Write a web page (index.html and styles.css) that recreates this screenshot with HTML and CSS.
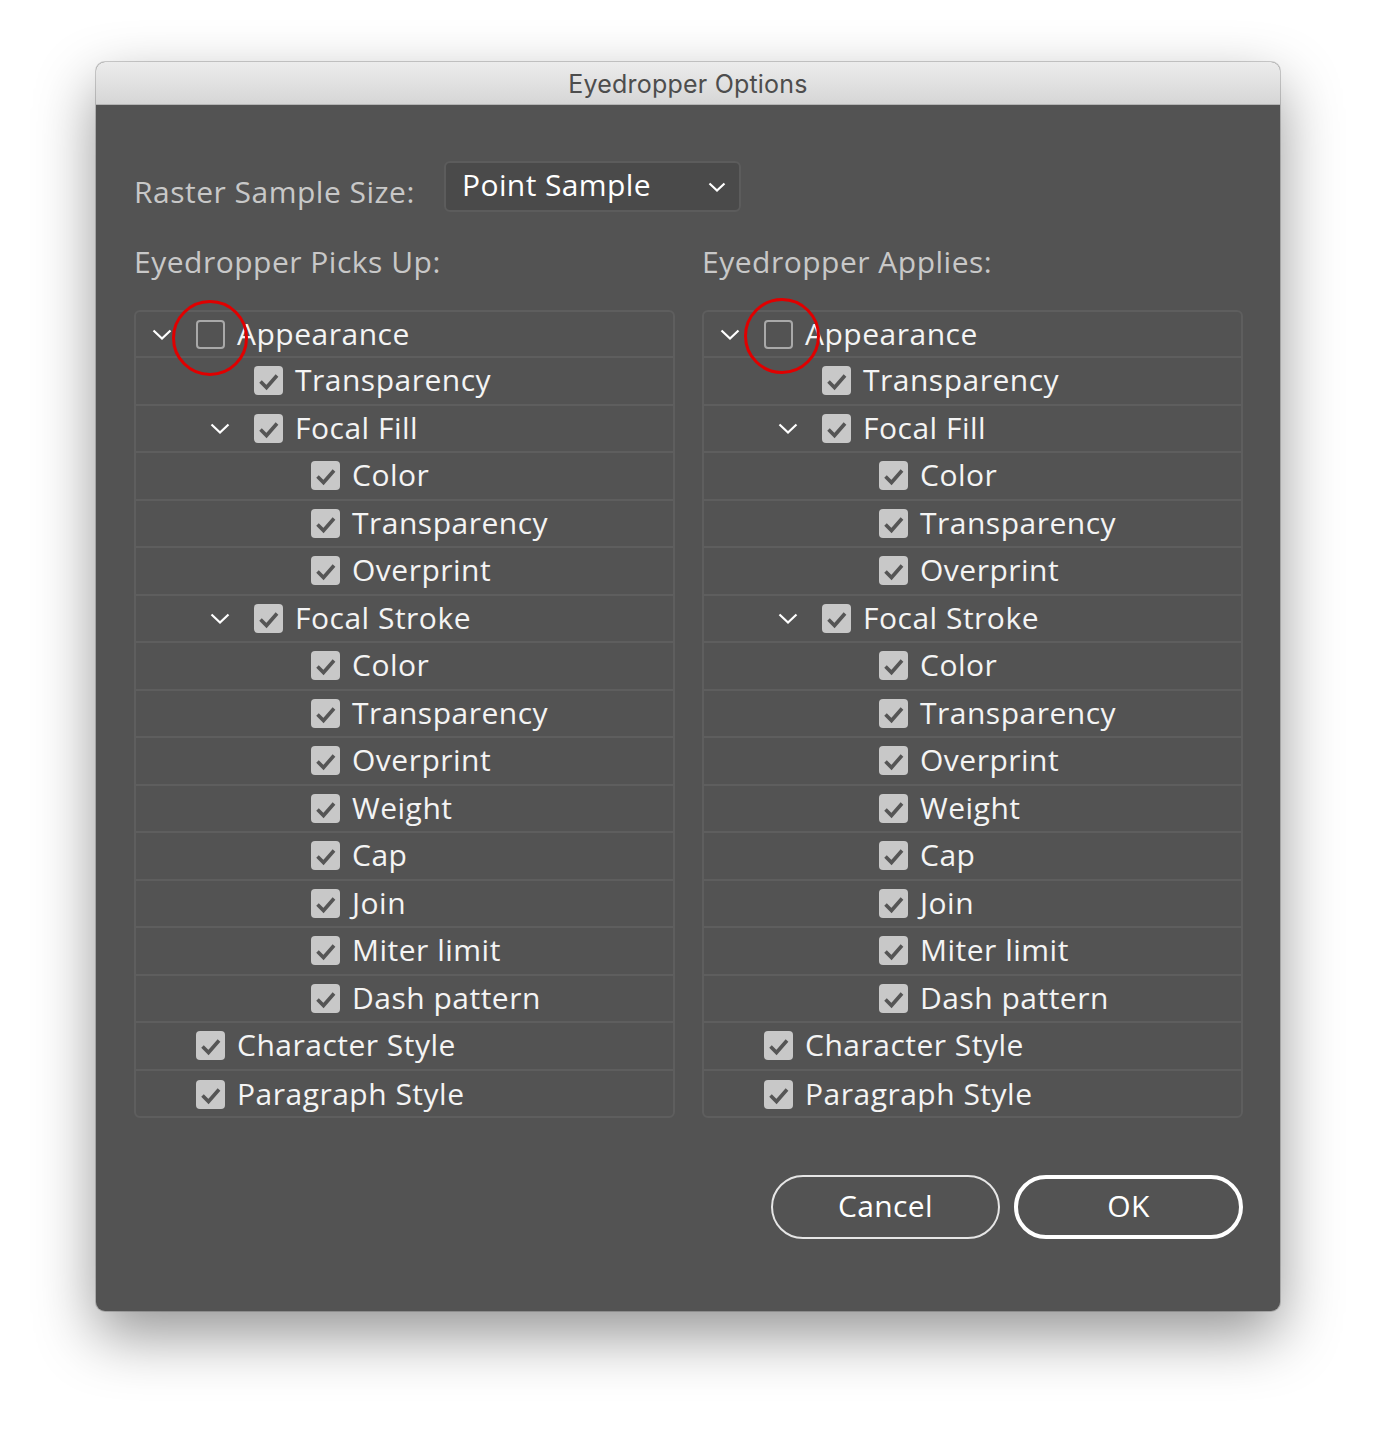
FILE: index.html
```html
<!DOCTYPE html>
<html>
<head>
<meta charset="utf-8">
<title>Eyedropper Options</title>
<link rel="stylesheet" href="styles.css">
</head>
<body>
<div class="window">
  <div class="titlebar">Eyedropper Options</div>
  <div class="content">
    <div class="raster">
      <span class="label">Raster Sample Size:</span>
      <div class="select">
        <span class="select-text">Point Sample</span>
        <svg class="select-chev" width="18" height="10" viewBox="0 0 18 10"><polyline points="1.5,1.5 9,8.5 16.5,1.5" fill="none" stroke="#fff" stroke-width="2.2"/></svg>
      </div>
    </div>
    <div class="columns">
      <div class="col">
        <div class="head">Eyedropper Picks Up:</div>
        <div class="panel" id="p1"></div>
      </div>
      <div class="col">
        <div class="head">Eyedropper Applies:</div>
        <div class="panel" id="p2"></div>
      </div>
    </div>
    <div class="buttons">
      <div class="btn">Cancel</div>
      <div class="btn default">OK</div>
    </div>
  </div>
</div>
<script src="app.js"></script>
</body>
</html>
```

FILE: app.js
```js
var items = [
  [0, true, false, "Appearance", true],
  [1, false, true, "Transparency"],
  [1, true, true, "Focal Fill"],
  [2, false, true, "Color"],
  [2, false, true, "Transparency"],
  [2, false, true, "Overprint"],
  [1, true, true, "Focal Stroke"],
  [2, false, true, "Color"],
  [2, false, true, "Transparency"],
  [2, false, true, "Overprint"],
  [2, false, true, "Weight"],
  [2, false, true, "Cap"],
  [2, false, true, "Join"],
  [2, false, true, "Miter limit"],
  [2, false, true, "Dash pattern"],
  [0, false, true, "Character Style"],
  [0, false, true, "Paragraph Style"]
];
var chev = '<svg width="20" height="11" viewBox="0 0 20 11"><polyline points="1.5,1.5 10,9.5 18.5,1.5" fill="none" stroke="#fff" stroke-width="2.2"/></svg>';
var tick = '<svg width="29" height="29" viewBox="0 0 29 29"><polyline points="6.5,15.5 12.5,21.5 23,9.5" fill="none" stroke="#555" stroke-width="3.6"/></svg>';
function build(id, circleClass) {
  var p = document.getElementById(id);
  var html = "";
  items.forEach(function (it) {
    html += '<div class="row l' + it[0] + '">' +
      '<span class="chev">' + (it[1] ? chev : "") + '</span>' +
      '<span class="cb ' + (it[2] ? "on" : "off") + '">' + (it[2] ? tick : "") +
      (it[4] ? '<span class="ring ' + circleClass + '"></span>' : "") + '</span>' +
      '<span class="lbl">' + it[3] + '</span></div>';
  });
  p.innerHTML = html;
}
build("p1", "ring-a");
build("p2", "ring-b");
```

FILE: styles.css
```css
html, body {
  margin: 0;
  padding: 0;
  background: #ffffff;
}
body {
  width: 1376px;
  height: 1446px;
  overflow: hidden;
  font-family: "Open Sans", "Liberation Sans", sans-serif;
}
.window {
  margin: 62px 0 0 96px;
  width: 1184px;
  height: 1249px;
  background: #535353;
  border-radius: 9px;
  overflow: hidden;
  box-shadow: 0 24px 60px rgba(0, 0, 0, 0.42), 0 0 0 1px rgba(0, 0, 0, 0.18);
  display: flex;
  flex-direction: column;
}
.titlebar {
  height: 42px;
  flex: none;
  background: linear-gradient(#ececec, #d6d6d6);
  border-bottom: 1px solid #b4b4b4;
  text-align: center;
  font-family: "Inter", "Noto Sans", sans-serif;
  font-size: 25px;
  line-height: 45px;
  color: #4d4d4d;
  letter-spacing: 0.2px;
}
.content {
  padding: 56px 37px 0 38px;
  display: flex;
  flex-direction: column;
}
.raster {
  display: flex;
  align-items: center;
  height: 51px;
}
.label, .head {
  color: #c8c8c8;
  font-size: 30px;
  letter-spacing: 0.5px;
}
.label {
  margin-top: 9px;
  width: 310px;
}
.select {
  box-sizing: border-box;
  width: 297px;
  height: 51px;
  background: #4a4a4a;
  border: 2px solid #5c5c5c;
  border-radius: 6px;
  display: flex;
  align-items: center;
  padding: 0 13px 0 16px;
}
.select-text {
  flex: 1;
  color: #ffffff;
  font-size: 30px;
  letter-spacing: 0.4px;
  margin-top: -4px;
}
.select-chev {
  display: block;
}
.columns {
  display: flex;
  gap: 27px;
  margin-top: 24px;
}
.col {
  width: 541px;
}
.head {
  height: 74px;
  line-height: 52px;
}
.panel {
  box-sizing: border-box;
  height: 808px;
  border: 2px solid #5e5e5e;
  border-radius: 6px;
  display: flex;
  flex-direction: column;
}
.row {
  box-sizing: border-box;
  height: 47.5px;
  flex: none;
  display: flex;
  align-items: center;
  border-bottom: 2px solid #5e5e5e;
  padding-left: 16px;
}
.row:first-child {
  height: 46px;
}
.row:last-child {
  border-bottom: none;
}
.row.l1 { padding-left: 74px; }
.row.l2 { padding-left: 131px; }
.chev {
  width: 44px;
  flex: none;
  display: flex;
  align-items: center;
}
.chev svg { display: block; }
.cb {
  position: relative;
  box-sizing: border-box;
  width: 29px;
  height: 29px;
  flex: none;
  border-radius: 4px;
}
.cb svg { display: block; }
.cb.on {
  background: #c8c8c8;
}
.cb.off {
  border: 2px solid #a9a9a9;
}
.lbl {
  margin-left: 12px;
  color: #f4f4f4;
  font-size: 30px;
  letter-spacing: 0.5px;
  white-space: nowrap;
  margin-top: -2px;
}
.ring {
  position: absolute;
  width: 76px;
  height: 76px;
  box-sizing: border-box;
  border: 3.5px solid #e00000;
  border-radius: 50%;
}
.ring-a {
  left: -26px;
  top: -22px;
}
.ring-b {
  left: -22px;
  top: -24px;
}
.buttons {
  display: flex;
  justify-content: flex-end;
  gap: 14px;
  margin-top: 57px;
}
.btn {
  box-sizing: border-box;
  width: 229px;
  height: 64px;
  border: 2px solid #e6e6e6;
  border-radius: 32px;
  color: #ffffff;
  font-size: 30px;
  letter-spacing: 0.4px;
  display: flex;
  align-items: center;
  justify-content: center;
  padding-bottom: 3px;
}
.btn.default {
  border: 4px solid #ffffff;
}
```
